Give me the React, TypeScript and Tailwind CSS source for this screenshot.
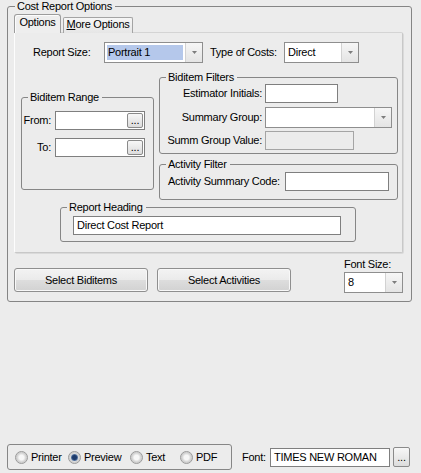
import React from "react";

// small grey triangle used on every dropdown button
const Arrow = () => (
  <svg width="5" height="3" viewBox="0 0 5 3">
    <polygon points="0,0 5,0 2.5,3" fill="#7d7d7d" />
  </svg>
);

function Group({ title, className, children }: { title: string; className: string; children?: React.ReactNode }) {
  return (
    <fieldset className={`border border-[#868686] rounded-[3px] ${className}`}>
      <legend className="ml-[6px] pl-[2px] pr-[3px] leading-[13px]">{title}</legend>
      {children}
    </fieldset>
  );
}

function Combo({ className, text, selected }: { className: string; text?: string; selected?: boolean }) {
  return (
    <div className={`flex border border-[#8e8e8e] bg-white ${className}`}>
      <div className="flex flex-1 p-[2px]">
        <div className={`flex flex-1 items-center pl-[1px] ${selected ? "bg-[#b5c8eb]" : ""}`}>{text}</div>
      </div>
      <div className="flex w-[17px] items-center justify-center border-l border-[#d2d2d2] bg-[linear-gradient(#f6f6f6,#e4e4e4)]">
        <Arrow />
      </div>
    </div>
  );
}

function TextBox({ className, text, disabled, children }: { className: string; text?: string; disabled?: boolean; children?: React.ReactNode }) {
  return (
    <div className={`flex items-center border ${disabled ? "border-[#a5a5a5] bg-[#ececec]" : "border-[#7f7f7f] bg-white"} ${className}`}>
      <span className="flex-1 whitespace-nowrap pl-[3px]">{text}</span>
      {children}
    </div>
  );
}

function Dots({ className }: { className: string }) {
  return (
    <button type="button" className={`flex items-center justify-center rounded-[2px] border border-[#8a8a8a] bg-[linear-gradient(#f7f7f7,#dcdcdc)] leading-[13px] ${className}`}>
      ...
    </button>
  );
}

function Btn({ label }: { label: string }) {
  return (
    <button type="button" className="flex h-[24px] w-[134px] items-center justify-center rounded-[3px] border border-[#8f8f8f] bg-[linear-gradient(#f3f3f3,#ebebeb_48%,#dddddd_52%,#d2d2d2)] shadow-[inset_0_0_0_1px_#f8f8f8]">
      {label}
    </button>
  );
}

function Radio({ label, checked, className }: { label: string; checked?: boolean; className: string }) {
  return (
    <div className={`flex items-center gap-[3px] ${className}`}>
      <span className="flex h-[13px] w-[13px] items-center justify-center rounded-full border border-[#9a9a9a] bg-[radial-gradient(circle,#f7f7f7_30%,#cdcdcd_62%,#e9e9e9_85%)]">
        {checked && <span className="h-[7px] w-[7px] rounded-full bg-[radial-gradient(circle,#1d3b6c_40%,#6e8cb6_75%,#c3d0e3)]" />}
      </span>
      <span>{label}</span>
    </div>
  );
}

export default function App() {
  return (
    <div className="flex h-[473px] w-[421px] flex-col overflow-hidden bg-[#ececec] font-['Liberation_Sans',Arial,sans-serif] text-[11px] leading-[13px] tracking-[-0.25px] text-black">
      {/* Cost Report Options */}
      <fieldset className="ml-[7px] h-[302px] w-[405px] rounded-[3px] border border-[#858585]">
        <legend className="ml-[7px] pl-[2px] pr-[3px] leading-[13px]">Cost Report Options</legend>

        {/* tabs */}
        <div className="ml-[6px] mt-[1px] flex h-[19px] items-end">
          <div className="relative z-10 flex h-[19px] w-[47px] justify-center rounded-t-[3px] border border-b-0 border-[#9c9c9c] bg-[#eeeeee] pt-[1px] shadow-[inset_1px_1px_0_#fcfcfc]">
            Options
          </div>
          <div className="ml-[2px] flex h-[16px] w-[70px] justify-center rounded-t-[2px] border border-b-0 border-[#a4a4a4] bg-[linear-gradient(#f6f6f6,#e6e6e6)]">
            <span><span className="underline underline-offset-[1px]">M</span>ore Options</span>
          </div>
        </div>

        {/* tab page */}
        <div className="-mt-[1px] ml-[6px] h-[221px] w-[389px] rounded-[2px] border border-[#c8c8c8] border-l-[#fdfdfd] border-t-[#d4d4d4] bg-[#ececec] shadow-[1px_1px_0_#dadada]">
          <div className="mt-[9px] flex h-[21px] items-center">
            <span className="w-[89px] pl-[18px]">Report Size:</span>
            <Combo className="h-[21px] w-[99px]" text="Portrait 1" selected />
            <span className="w-[81px] pl-[7px]">Type of Costs:</span>
            <Combo className="h-[21px] w-[75px]" text="Direct" />
          </div>

          <div className="ml-[6px] flex items-start">
            <Group title="Biditem Range" className="mt-[28px] h-[99px] w-[133px]">
              <div className="mt-[7px] flex items-center">
                <span className="w-[33px] pr-[4px] text-right">From:</span>
                <TextBox className="h-[19px] w-[90px]">
                  <Dots className="mr-[1px] h-[15px] w-[16px]" />
                </TextBox>
              </div>
              <div className="mt-[8px] flex items-center">
                <span className="w-[33px] pr-[4px] text-right">To:</span>
                <TextBox className="h-[19px] w-[90px]">
                  <Dots className="mr-[1px] h-[15px] w-[16px]" />
                </TextBox>
              </div>
            </Group>

            <div className="ml-[5px] mt-[8px] flex w-[239px] flex-col">
              <Group title="Biditem Filters" className="h-[83px] w-[239px]">
                <div className="flex items-center">
                  <span className="w-[105px] pr-[3px] text-right">Estimator Initials:</span>
                  <TextBox className="h-[19px] w-[73px]" />
                </div>
                <div className="mt-[4px] flex items-center">
                  <span className="w-[105px] pr-[3px] text-right">Summary Group:</span>
                  <Combo className="h-[21px] w-[127px]" />
                </div>
                <div className="mt-[3px] flex items-center">
                  <span className="w-[105px] whitespace-nowrap pr-[3px] text-right">Summ Group Value:</span>
                  <TextBox className="h-[19px] w-[89px]" disabled />
                </div>
              </Group>
              <Group title="Activity Filter" className="mt-[4px] h-[42px] w-[239px]">
                <div className="mt-[1px] flex items-center">
                  <span className="w-[125px] whitespace-nowrap pl-[8px]">Activity Summary Code:</span>
                  <TextBox className="h-[19px] w-[104px]" />
                </div>
              </Group>
            </div>
          </div>

          <Group title="Report Heading" className="ml-[45px] mt-[1px] h-[41px] w-[296px]">
            <TextBox className="ml-[12px] mt-[2px] h-[19px] w-[268px]" text="Direct Cost Report" />
          </Group>
        </div>

        {/* buttons + font size */}
        <div className="ml-[6px] mt-[5px] flex items-start">
          <div className="mt-[10px] flex gap-[9px]">
            <Btn label="Select Biditems" />
            <Btn label="Select Activities" />
          </div>
          <div className="ml-[53px] flex flex-col">
            <span>Font Size:</span>
            <Combo className="mt-[1px] h-[21px] w-[59px]" text="8" />
          </div>
        </div>
      </fieldset>

      {/* output + font */}
      <div className="mb-[3px] mt-auto flex items-center">
        <div className="ml-[7px] flex h-[26px] w-[225px] items-center rounded-[3px] border border-[#868686] pl-[7px]">
          <Radio label="Printer" className="w-[53px]" />
          <Radio label="Preview" className="w-[62px]" checked />
          <Radio label="Text" className="w-[50px]" />
          <Radio label="PDF" className="w-[45px]" />
        </div>
        <span className="ml-[10px] w-[28px]">Font:</span>
        <TextBox className="h-[19px] w-[120px]" text="TIMES NEW ROMAN" />
        <Dots className="ml-[3px] h-[20px] w-[17px]" />
      </div>
    </div>
  );
}
